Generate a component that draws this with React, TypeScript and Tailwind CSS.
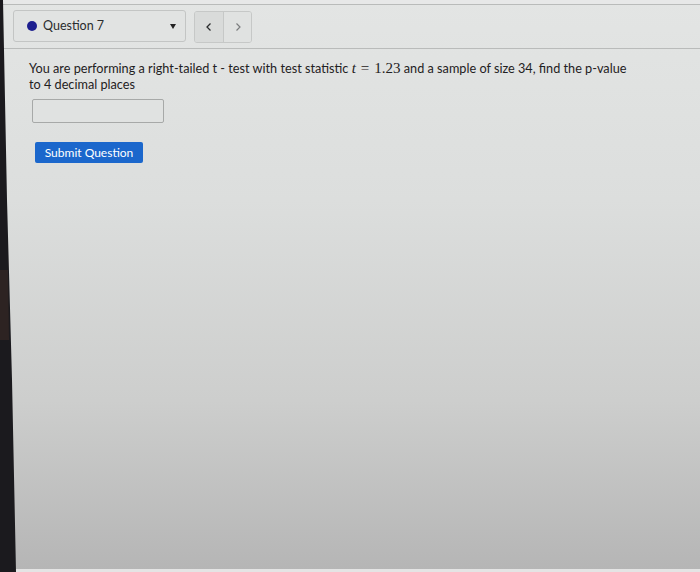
import React from "react";

export default function App() {
  return (
    <div className="relative h-[572px] w-[700px] overflow-hidden bg-[linear-gradient(180deg,#e3e5e4_0%,#dcdedd_35%,#cdcecd_70%,#b5b5b5_100%)] font-['Lato','Open_Sans',sans-serif] text-[#1f2122]">
      {/* top strip */}
      <div className="h-[4px] bg-[#e7e8e8]" />
      {/* header */}
      <div className="flex items-start border-t border-b border-[#b9bbba] pl-[13px] pt-[5px] pb-[5px]">
        <div className="flex h-[32px] w-[173px] items-center rounded-[3px] border border-[#c3c5c4] bg-[#e1e3e2] pl-[13px] pr-[9px]">
          <span className="h-[10px] w-[10px] rounded-full bg-[#1d1f8f]" />
          <span className="ml-[6px] text-[12.5px] leading-none text-[#2a2c2d]">Question 7</span>
          <span className="ml-auto h-0 w-0 border-x-[3.5px] border-t-[5px] border-x-transparent border-t-[#222]" />
        </div>
        <div className="ml-[8px] mt-[1px] flex h-[32px] w-[58px] overflow-hidden rounded-[3px] border border-[#c6c8c7]">
          <div className="flex w-[29px] items-center justify-center border-r border-[#c6c8c7] bg-[#d9dbda]">
            <svg width="8" height="10" viewBox="0 0 8 10" fill="none">
              <path d="M5.5 1.5 L2 5 L5.5 8.5" stroke="#2b2d2e" strokeWidth="1.3" />
            </svg>
          </div>
          <div className="flex flex-1 items-center justify-center bg-[#e0e2e1]">
            <svg width="8" height="10" viewBox="0 0 8 10" fill="none">
              <path d="M2.5 1.5 L6 5 L2.5 8.5" stroke="#7b7d7e" strokeWidth="1.2" />
            </svg>
          </div>
        </div>
      </div>
      {/* content */}
      <div className="pl-[29px] pt-[11px]">
        <p className="text-[12.7px] leading-[16px]">
          You are performing a right-tailed t - test with test statistic{" "}
          <span className="font-['Liberation_Serif',serif] text-[15px]">
            <i>t</i>
            <span className="mx-[5px]">=</span>1.23
          </span>{" "}
          and a sample of size 34, find the p-value
          <br />
          to 4 decimal places
        </p>
        <div className="mt-[7px] ml-[3px] h-[24px] w-[132px] rounded-[2px] border border-[#a7a9a8] bg-[#e0e2e1]" />
        <button className="mt-[19px] ml-[6px] flex h-[21px] w-[108px] items-center justify-center rounded-[2px] bg-[#1b67cc] text-[12px] leading-none text-white">
          Submit Question
        </button>
      </div>
      {/* bottom edge */}
      <div className="absolute bottom-0 left-0 right-0 h-[3px] bg-[#e4e4e4]" />
      {/* left bezel wedge */}
      <svg className="absolute left-0 top-0" width="20" height="572" viewBox="0 0 20 572">
        <polygon points="0,0 3,0 7,200 12,380 16,572 0,572" fill="#1b1a1e" />
        <polygon points="0,270 8,270 9,340 0,340" fill="#3a2a24" opacity="0.6" />
      </svg>
    </div>
  );
}
